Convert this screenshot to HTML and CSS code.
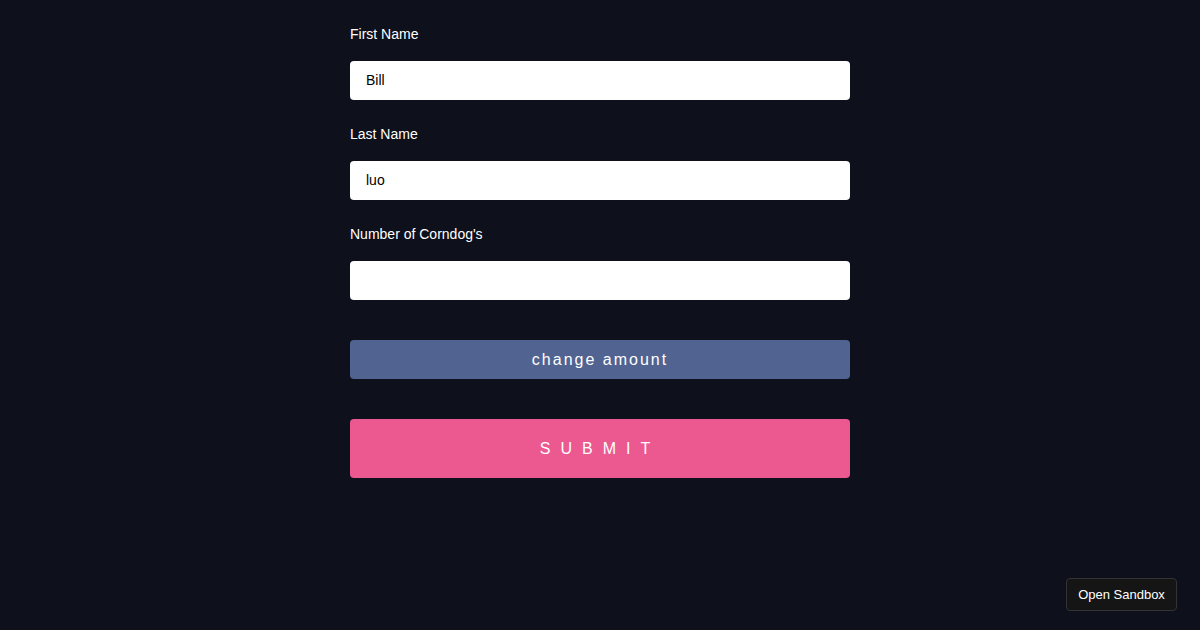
FILE: index.html
```html
<!DOCTYPE html>
<html>
<head>
<meta charset="utf-8">
<link rel="stylesheet" href="styles.css">
</head>
<body>
<form class="form">
  <label class="label">First Name</label>
  <input class="input" value="Bill">
  <label class="label">Last Name</label>
  <input class="input" value="luo">
  <label class="label">Number of Corndog's</label>
  <input class="input" value="">
  <button type="button" class="btn-change">change amount</button>
  <button type="button" class="btn-submit">submit</button>
</form>
<div class="sandbox">Open Sandbox</div>
</body>
</html>
```
FILE: styles.css
```css
html, body {
  margin: 0;
  padding: 0;
  background: #0e101c;
  font-family: "Liberation Sans", Arial, sans-serif;
  height: 100%;
}
.form {
  width: 500px;
  margin: 0 auto;
  padding-top: 24px;
  display: flex;
  flex-direction: column;
}
.label {
  display: block;
  color: #fff;
  font-size: 14px;
  line-height: 20px;
  height: 20px;
  margin-bottom: 17px;
}
.input {
  display: block;
  box-sizing: border-box;
  width: 100%;
  height: 39px;
  border: none;
  border-radius: 4px;
  padding: 0 16px 2px 16px;
  font-family: "Liberation Sans", Arial, sans-serif;
  font-size: 14px;
  color: #000;
  background: #fff;
  margin: 0 0 24px 0;
  outline: none;
}
.input:last-of-type {
  margin-bottom: 40px;
}
.btn-change {
  box-sizing: border-box;
  height: 39px;
  width: 100%;
  border: none;
  border-radius: 4px;
  background: #516391;
  color: #fff;
  font-family: "Liberation Sans", Arial, sans-serif;
  font-size: 16px;
  letter-spacing: 2px;
  margin: 0 0 40px 0;
  padding: 0;
}
.btn-submit {
  box-sizing: border-box;
  height: 59px;
  width: 100%;
  border: none;
  border-radius: 4px;
  background: #ec5990;
  color: #fff;
  font-family: "Liberation Sans", Arial, sans-serif;
  font-size: 16px;
  text-transform: uppercase;
  letter-spacing: 10px;
  margin: 0;
  padding: 0;
}
.sandbox {
  position: fixed;
  right: 23px;
  bottom: 19px;
  box-sizing: border-box;
  width: 111px;
  height: 33px;
  background: #151515;
  border: 1px solid #333;
  border-radius: 4px;
  color: #fff;
  font-size: 13px;
  display: flex;
  align-items: center;
  justify-content: center;
}
```
